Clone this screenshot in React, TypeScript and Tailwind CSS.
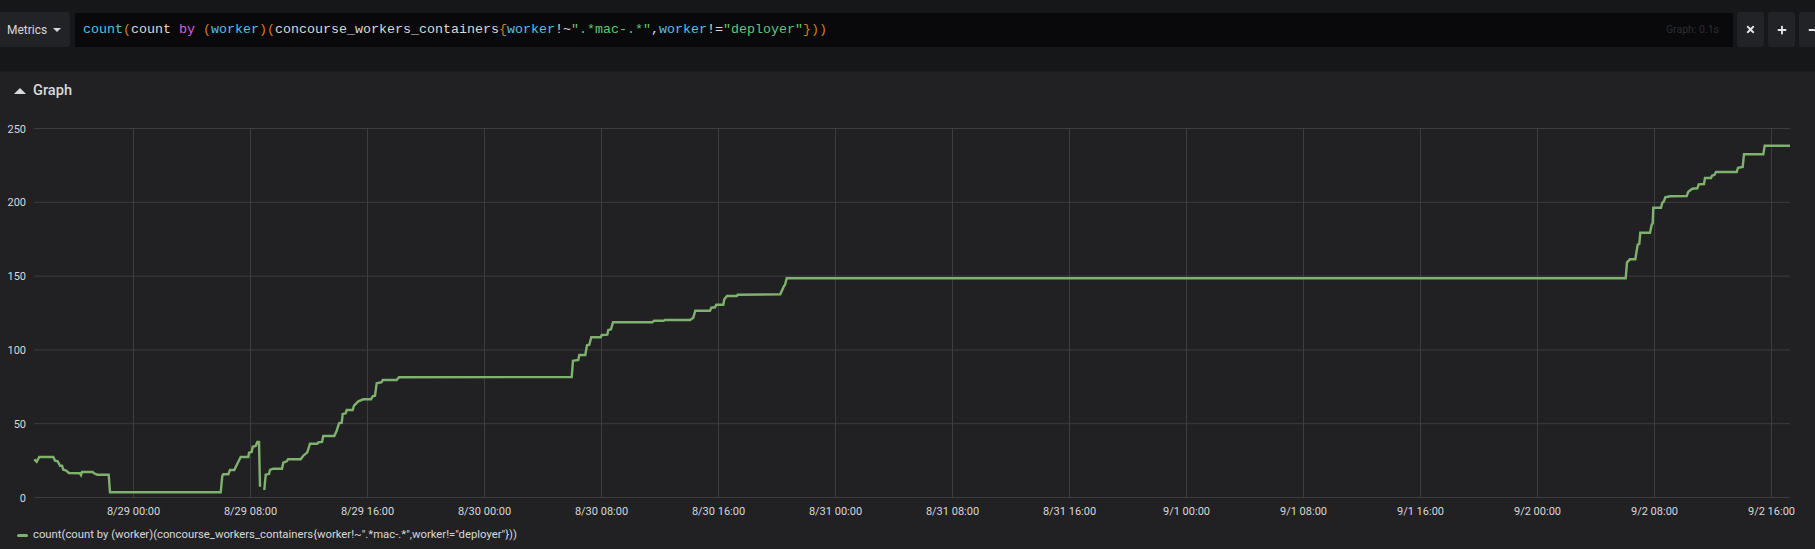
import { FaMinus, FaPlus, FaTimes } from "react-icons/fa";

const ticks = ["8/29 00:00", "8/29 08:00", "8/29 16:00", "8/30 00:00", "8/30 08:00", "8/30 16:00", "8/31 00:00", "8/31 08:00", "8/31 16:00", "9/1 00:00", "9/1 08:00", "9/1 16:00", "9/2 00:00", "9/2 08:00", "9/2 16:00"];
const yTicks = [250, 200, 150, 100, 50, 0];

// svg starts at y=110 in the page
const top = 110;
const seriesA = "34.3,459.3 36.7,461.7 39.3,457 53.3,457 55,460.7 57.7,461.3 60,465.7 62,465.7 63.3,469.7 65.7,470.3 69,473 80,473.3 81,475 82,472 92.7,472 94,473.3 97.3,474.7 108.7,474.7 110,492.3 220.7,492.3 222.3,476 223.3,474.3 228.3,474.3 230,470 234.3,470 238.3,461.7 240.7,457 248.3,457 249,452.7 251.7,452 252.7,446.7 255.7,446 257.3,442 259,442 260,486.7";
const seriesB = "264.3,490 265.7,474.7 269,474 270,470 273.3,468.7 282,468.7 283.3,462.7 286.7,461.3 288,459.3 300.7,459.3 303.3,455.7 307.3,452.3 310,443.7 317.3,443.7 318.3,442.3 322,442 323.3,436 334.3,436 336.7,430.7 339,423.3 341.7,422.7 342.7,414 345.7,413.3 346.7,410 352.7,410 354,405.7 358.3,401.3 363.3,399.3 371,399.3 372.7,396.3 375,395.7 376.7,383.3 381.7,382.3 382.7,380 396.7,380 399,377.3 571.7,377 573,360.7 578.3,360 579.3,355 585.3,355 587,345.3 589.3,344.7 591.3,337.3 600.7,337.3 601.7,335 607.3,334.7 608.3,330 611,329.3 613,322.3 652.3,322.3 654,320.7 663.7,320.7 665,320 690,320 693.3,317.7 695.3,310.7 710,310.7 711.3,307.7 715,307.3 716.3,304.7 723.3,304.7 724.3,299.3 727,296 736.7,296 737.7,294.7 780.3,294.3 784,286 785,285 786.7,278.3 1625.7,278.3 1627,262.3 1630,259.3 1635.3,259.3 1637.7,244.7 1639.3,244 1640.3,232.7 1650,232.7 1651.7,224.7 1652.7,223.3 1653.3,207.7 1661,207.7 1662.3,202.7 1663.7,201.7 1665.3,197.3 1670,196.3 1686.7,196 1688.3,191.7 1692.3,188.7 1697.3,188.3 1698.7,184.3 1704,184 1705,178 1711,178 1712,175.7 1714.3,175 1716,172 1736.7,172 1738,167.7 1742.7,167 1744,154.3 1763.3,154.3 1764.7,145.7 1790,145.7";

function shift(points: string) {
  return points.split(" ").map((p) => {
    const [x, y] = p.split(",").map(Number);
    return `${x},${(y - top).toFixed(1)}`;
  }).join(" ");
}

function Chart() {
  return (
    <svg width="1815" height="415" className="block">
      {yTicks.map((v, i) => {
        const y = 18.5 + i * 73.8;
        return (
          <g key={v}>
            <line x1="34" x2="1790" y1={y} y2={y} stroke="#3d3d3f" />
            <text x="26" y={y + 4} textAnchor="end" fontSize="11" fill="#d8d9da">{v}</text>
          </g>
        );
      })}
      {ticks.map((t, i) => {
        const x = 133.5 + i * 117;
        return (
          <g key={t}>
            <line x1={x} x2={x} y1="18" y2="387" stroke="#3d3d3f" />
            <text x={x} y="405" textAnchor="middle" fontSize="11" fill="#d8d9da">{t}</text>
          </g>
        );
      })}
      <polyline points={shift(seriesA)} fill="none" stroke="#7eb26d" strokeWidth="2.4" />
      <polyline points={shift(seriesB)} fill="none" stroke="#7eb26d" strokeWidth="2.4" />
    </svg>
  );
}

function ToolButton({ children }: { children: React.ReactNode }) {
  return (
    <div className="w-[27px] h-[35px] shrink-0 rounded-[3px] bg-[#222327] text-[#e3e4e6] flex items-center justify-center">
      {children}
    </div>
  );
}

export default function App() {
  return (
    <div className="h-[549px] w-full overflow-hidden flex flex-col bg-[#212124] font-['Roboto',sans-serif]">
      <div className="h-[72px] shrink-0 bg-[#161719] pt-3 border-b border-[#1c1d1f] flex items-start">
        <div className="w-[70px] h-[35px] shrink-0 rounded-r-[3px] bg-[#222327] flex items-center pl-[7px] gap-[6px] text-[12px] text-[#d8d9da]">
          Metrics
          <span className="w-0 h-0 border-x-[4px] border-x-transparent border-t-[4px] border-t-[#d8d9da]" />
        </div>
        <div className="ml-[5px] mt-px w-[1658px] h-[34px] shrink-0 bg-[#09090b] flex items-center justify-between pl-[8px] pr-[14px]">
          <span className="font-['Liberation_Mono',monospace] text-[13.33px] whitespace-pre text-[#d8d9da]">
            <span className="text-[#4fc1e9]">count</span>
            <span className="text-[#d97b1c]">(</span>count <span className="text-[#d65fd6]">by</span> <span className="text-[#d97b1c]">(</span>
            <span className="text-[#4fc1e9]">worker</span>
            <span className="text-[#d97b1c]">)(</span>concourse_workers_containers<span className="text-[#d97b1c]">{"{"}</span>
            <span className="text-[#4fc1e9]">worker</span>!~<span className="text-[#5dc878]">".*mac-.*"</span>,<span className="text-[#4fc1e9]">worker</span>!=<span className="text-[#5dc878]">"deployer"</span>
            <span className="text-[#d97b1c]">{"}))"}</span>
          </span>
          <span className="text-[10.5px] text-[#2d2e31]">Graph: 0.1s</span>
        </div>
        <div className="ml-[4px] flex gap-[4px]">
          <ToolButton><FaTimes size={11} /></ToolButton>
          <ToolButton><FaPlus size={10} /></ToolButton>
          <ToolButton><FaMinus size={10} /></ToolButton>
        </div>
      </div>
      <div className="h-[38px] shrink-0 flex items-center pl-[14px] gap-[7px] text-[14.6px] font-medium text-[#d8d9da]">
        <span className="w-0 h-0 border-x-[6px] border-x-transparent border-b-[6px] border-b-[#d8d9da]" />
        Graph
      </div>
      <Chart />
      <div className="h-[20px] flex items-center pl-[17px] gap-[5px] text-[11.3px] text-[#d8d9da]">
        <span className="w-[11px] h-[3px] rounded-sm bg-[#7eb26d]" />
        count(count by (worker)(concourse_workers_containers{"{"}worker!~".*mac-.*",worker!="deployer"{"}"}))
      </div>
    </div>
  );
}
